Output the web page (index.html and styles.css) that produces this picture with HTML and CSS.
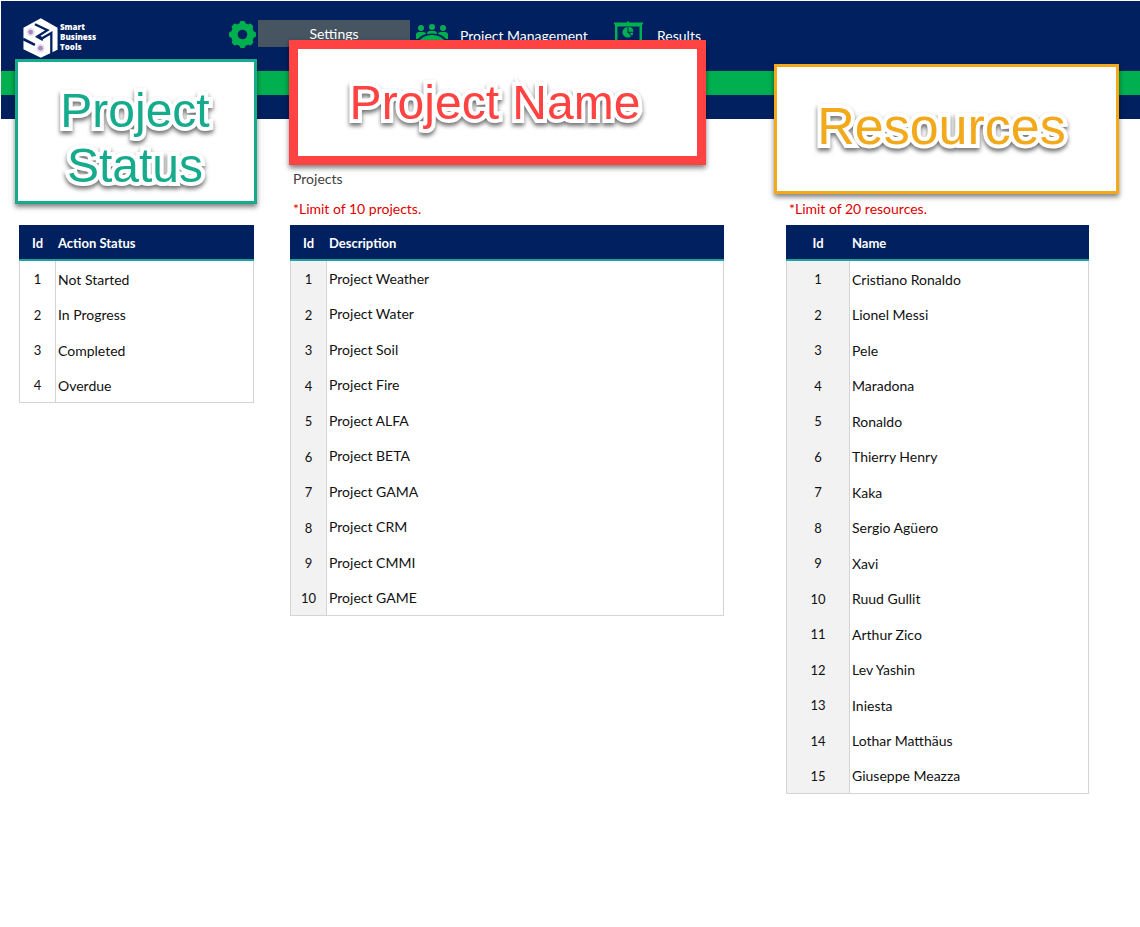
FILE: index.html
```html
<!DOCTYPE html>
<html lang="en">
<head>
    <meta charset="UTF-8">
    <meta name="viewport" content="width=device-width, initial-scale=1.0">
    <title>Settings - Smart Business Tools</title>
    <link rel="stylesheet" href="styles.css">
</head>
<body>
    <header class="header">
        <div class="topbar">
            <a href="#" class="logo">
                <svg class="logo-mark" viewBox="0 0 106 122" aria-hidden="true">
                    <path fill="#fff" d="M54 1 L105 30 V97 L54 121 L1 95 V30 Z"/>
                    <path fill="none" stroke="#002060" stroke-width="7" d="M36 19 L74 37 L46 55 L58 62 L86 46 V108"/>
                    <path fill="none" stroke="#002060" stroke-width="8" d="M0 64 L36 82"/>
                    <path fill="none" stroke="#002060" stroke-width="5" d="M38 56 L60 68"/>
                    <circle cx="23" cy="43" r="13" fill="#e6def0"/>
                    <circle cx="23" cy="43" r="7" fill="#a58abf"/>
                    <circle cx="53" cy="92" r="13" fill="#e6def0"/>
                    <circle cx="53" cy="92" r="7" fill="#a58abf"/>
                </svg>
                <span class="logo-text">Smart<br>Business<br>Tools</span>
            </a>
            <nav class="nav">
                <svg class="nav-icon gear" viewBox="0 0 28 28" aria-hidden="true">
                    <g fill="#00b050">
                        <circle cx="14" cy="14" r="12"/>
                        <rect x="11" y="0" width="6" height="28" rx="2"/>
                        <rect x="11" y="0" width="6" height="28" rx="2" transform="rotate(45 14 14)"/>
                        <rect x="11" y="0" width="6" height="28" rx="2" transform="rotate(90 14 14)"/>
                        <rect x="11" y="0" width="6" height="28" rx="2" transform="rotate(135 14 14)"/>
                    </g>
                    <circle cx="14" cy="14" r="5" fill="#002060"/>
                </svg>
                <a href="#" class="nav-link active">Settings</a>
                <svg class="nav-icon people" viewBox="0 0 32 26" aria-hidden="true">
                    <g fill="#00b050">
                        <circle cx="5" cy="5" r="3"/>
                        <circle cx="16" cy="4" r="3"/>
                        <circle cx="27" cy="5" r="3"/>
                        <path d="M0 16 V12 Q0 9 3 9 H7 Q10 9 10 11 Q5 12 2 16 Z"/>
                        <path d="M11 11 Q11 8 14 8 H18 Q21 8 21 11 Q16 10 11 11 Z"/>
                        <path d="M32 16 V12 Q32 9 29 9 H25 Q22 9 22 11 Q27 12 30 16 Z"/>
                        <path d="M2 20 Q6 12 16 12 Q26 12 30 20 V25 H2 Z"/>
                    </g>
                </svg>
                <a href="#" class="nav-link management">Project Management</a>
                <svg class="nav-icon board" viewBox="0 0 30 28" aria-hidden="true">
                    <g fill="#00b050">
                        <rect x="0" y="0.5" width="29" height="2"/>
                        <rect x="13" y="-0.5" width="2" height="3"/>
                        <path d="M1 2 H28 V24 H1 Z M3.5 4.5 V21 H25.5 V4.5 Z" fill-rule="evenodd"/>
                        <path d="M13.5 5 A5.3 5.3 0 1 0 17.2 14.3 L13.5 10.5 Z"/>
                        <path d="M14.5 4.8 A5.3 5.3 0 0 1 19.5 9.7 H14.5 Z"/>
                        <path d="M19.3 10.8 A5.3 5.3 0 0 1 18 13.7 L15 10.8 Z"/>
                    </g>
                </svg>
                <a href="#" class="nav-link results">Results</a>
            </nav>
        </div>
        <div class="stripe"></div>
    </header>

    <main class="content">
        <section class="panel">
            <h2 class="callout callout-status"><span>Project<br>Status</span></h2>
            <div class="panel-head"></div>
            <table class="list plain">
                <thead>
                    <tr><th class="id">Id</th><th>Action Status</th></tr>
                </thead>
                <tbody>
                    <tr><td class="id">1</td><td>Not Started</td></tr>
                    <tr><td class="id">2</td><td>In Progress</td></tr>
                    <tr><td class="id">3</td><td>Completed</td></tr>
                    <tr><td class="id">4</td><td>Overdue</td></tr>
                </tbody>
            </table>
        </section>

        <section class="panel">
            <h2 class="callout callout-project"><span>Project Name</span></h2>
            <div class="panel-head">
                <p class="panel-title">Projects</p>
                <p class="note">*Limit of 10 projects.</p>
            </div>
            <table class="list projects">
                <thead>
                    <tr><th class="id">Id</th><th>Description</th></tr>
                </thead>
                <tbody>
                    <tr><td class="id">1</td><td>Project Weather</td></tr>
                    <tr><td class="id">2</td><td>Project Water</td></tr>
                    <tr><td class="id">3</td><td>Project Soil</td></tr>
                    <tr><td class="id">4</td><td>Project Fire</td></tr>
                    <tr><td class="id">5</td><td>Project ALFA</td></tr>
                    <tr><td class="id">6</td><td>Project BETA</td></tr>
                    <tr><td class="id">7</td><td>Project GAMA</td></tr>
                    <tr><td class="id">8</td><td>Project CRM</td></tr>
                    <tr><td class="id">9</td><td>Project CMMI</td></tr>
                    <tr><td class="id">10</td><td>Project GAME</td></tr>
                </tbody>
            </table>
        </section>

        <section class="panel">
            <h2 class="callout callout-resources"><span>Resources</span></h2>
            <div class="panel-head">
                <p class="note">*Limit of 20 resources.</p>
            </div>
            <table class="list resources">
                <thead>
                    <tr><th class="id">Id</th><th>Name</th></tr>
                </thead>
                <tbody>
                    <tr><td class="id">1</td><td>Cristiano Ronaldo</td></tr>
                    <tr><td class="id">2</td><td>Lionel Messi</td></tr>
                    <tr><td class="id">3</td><td>Pele</td></tr>
                    <tr><td class="id">4</td><td>Maradona</td></tr>
                    <tr><td class="id">5</td><td>Ronaldo</td></tr>
                    <tr><td class="id">6</td><td>Thierry Henry</td></tr>
                    <tr><td class="id">7</td><td>Kaka</td></tr>
                    <tr><td class="id">8</td><td>Sergio Agüero</td></tr>
                    <tr><td class="id">9</td><td>Xavi</td></tr>
                    <tr><td class="id">10</td><td>Ruud Gullit</td></tr>
                    <tr><td class="id">11</td><td>Arthur Zico</td></tr>
                    <tr><td class="id">12</td><td>Lev Yashin</td></tr>
                    <tr><td class="id">13</td><td>Iniesta</td></tr>
                    <tr><td class="id">14</td><td>Lothar Matthäus</td></tr>
                    <tr><td class="id">15</td><td>Giuseppe Meazza</td></tr>
                </tbody>
            </table>
        </section>
    </main>
</body>
</html>
```
FILE: styles.css
```css
* {
    box-sizing: border-box;
}

body {
    font-family: Lato, "Open Sans", sans-serif;
    font-size: 14px;
    margin: 0;
    padding: 1px 0 0 1px;
    background-color: #fff;
    color: #111;
}

.header {
    background-color: #002060;
    padding-bottom: 24px;
}

.topbar {
    display: flex;
    align-items: flex-start;
    height: 70px;
    padding: 17px 22px 0;
}

.stripe {
    height: 24px;
    background-color: #00b050;
}

.logo {
    display: flex;
    align-items: flex-start;
    gap: 2px;
    width: 206px;
    color: #fff;
    text-decoration: none;
}

.logo-mark {
    width: 35px;
    height: 40px;
}

.logo-text {
    font-family: "Open Sans", sans-serif;
    font-size: 8px;
    font-weight: 800;
    line-height: 10px;
    padding-top: 4px;
}

.nav {
    display: flex;
    align-items: flex-start;
    padding-top: 2px;
}

.nav-link {
    color: #fff;
    line-height: 27px;
    text-decoration: none;
}

.nav-link.active {
    width: 152px;
    margin: 0 6px 0 2px;
    background-color: #465561;
    text-align: center;
}

.nav-link.management {
    width: 166px;
    padding: 2px 0 0 12px;
}

.nav-link.results {
    padding: 2px 0 0 13px;
}

.nav-icon {
    flex: none;
}

.gear {
    width: 27px;
    height: 27px;
    margin-top: 1px;
}

.people {
    width: 32px;
    height: 26px;
    margin-top: 3px;
}

.board {
    width: 30px;
    height: 28px;
    margin-top: 2px;
    overflow: visible;
}

.content {
    display: grid;
    grid-template-columns: 235fr 36fr 434fr 62fr 303fr;
    align-items: start;
    padding: 0 51px 40px 18px;
}

.panel {
    position: relative;
}

.panel:nth-child(2) {
    grid-column: 3;
}

.panel:nth-child(3) {
    grid-column: 5;
}

.panel-head {
    display: flex;
    flex-direction: column;
    justify-content: flex-end;
    height: 106px;
    padding-left: 3px;
}

.panel-title {
    margin: 0;
    line-height: 28px;
    color: #404040;
}

.note {
    margin: 0;
    line-height: 32px;
    color: #e00000;
}

/* Tables */
.list {
    width: 100%;
    border-spacing: 0;
    table-layout: fixed;
}

.list th {
    height: 36px;
    padding: 2px 2px 0;
    background-color: #002060;
    border-bottom: 2px solid #1ba39c;
    color: #fff;
    font-size: 13px;
    font-weight: bold;
    text-align: left;
}

.list td {
    height: 36px;
    padding: 0 2px;
    border-right: 1px solid #d4d4d4;
}

.list tr:nth-child(even) td {
    height: 35px;
}

.list tr:last-child td {
    border-bottom: 1px solid #d4d4d4;
}

.list .id {
    width: 37px;
    padding-left: 0;
    padding-right: 0;
    font-size: 13px;
    text-align: center;
}

.list td.id {
    border-left: 1px solid #d4d4d4;
    background-color: #f2f2f2;
}

.list.plain td.id {
    background-color: #fff;
}

.list.projects td:last-child {
    padding-bottom: 2px;
}

.list.resources .id {
    width: 64px;
}

/* Labels laid over the sheet */
.callout {
    position: absolute;
    display: flex;
    align-items: center;
    justify-content: center;
    margin: 0;
    background-color: #fff;
    border: 3px solid;
    box-shadow: 0 3px 5px rgba(0, 0, 0, 0.5);
    font-family: "Liberation Sans", Arial, sans-serif;
    font-size: 48px;
    font-weight: normal;
    line-height: 55px;
    text-align: center;
    white-space: nowrap;
}

.callout span {
    -webkit-text-stroke: 8px #fff;
    paint-order: stroke fill;
    stroke-linejoin: round;
    filter: drop-shadow(0 3px 2px rgba(0, 0, 0, 0.55));
}

.callout-status {
    top: -60px;
    left: -4px;
    right: -3px;
    height: 145px;
    padding: 12px 2px 0 0;
    color: #16ab8c;
}

.callout-project {
    top: -79px;
    left: -1px;
    right: 18px;
    height: 125px;
    padding-right: 5px;
    border-width: 9px;
    color: #ff4242;
}

.callout-resources {
    top: -55px;
    left: -12px;
    right: -30px;
    height: 130px;
    padding: 0 10px 6px 0;
    color: #f2a91b;
    font-size: 52px;
}
```
